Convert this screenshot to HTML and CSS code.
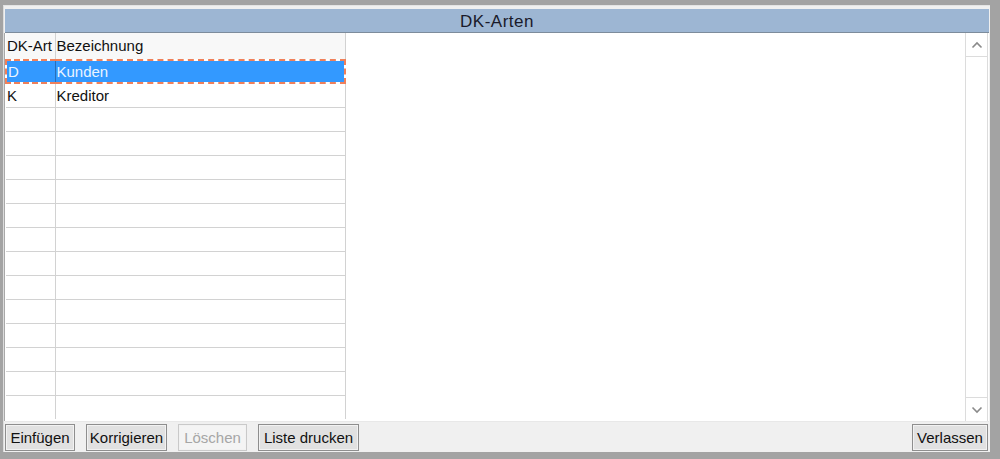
FILE: index.html
```html
<!DOCTYPE html>
<html lang="de">
<head>
<meta charset="utf-8">
<title>DK-Arten</title>
<link rel="stylesheet" href="styles.css">
</head>
<body>
<div class="window">
  <div class="titlebar">DK-Arten</div>
  <div class="main">
    <table class="grid">
      <colgroup><col class="col1"><col class="col2"></colgroup>
      <thead>
        <tr><th>DK-Art</th><th>Bezeichnung</th></tr>
      </thead>
      <tbody>
        <tr class="sel"><td class="c1">D</td><td class="c2">Kunden</td></tr>
        <tr><td>K</td><td>Kreditor</td></tr>
        <tr><td></td><td></td></tr>
        <tr><td></td><td></td></tr>
        <tr><td></td><td></td></tr>
        <tr><td></td><td></td></tr>
        <tr><td></td><td></td></tr>
        <tr><td></td><td></td></tr>
        <tr><td></td><td></td></tr>
        <tr><td></td><td></td></tr>
        <tr><td></td><td></td></tr>
        <tr><td></td><td></td></tr>
        <tr><td></td><td></td></tr>
        <tr><td></td><td></td></tr>
        <tr class="last"><td></td><td></td></tr>
      </tbody>
    </table>
    <div class="spacer"></div>
    <div class="scrollbar">
      <div class="sb-btn">
        <svg width="12" height="8" viewBox="0 0 12 8"><path d="M1.5 6.5 L6 2 L10.5 6.5" fill="none" stroke="#8a8a8a" stroke-width="1.6"/></svg>
      </div>
      <div class="sb-track"></div>
      <div class="sb-btn">
        <svg width="12" height="8" viewBox="0 0 12 8"><path d="M1.5 1.5 L6 6 L10.5 1.5" fill="none" stroke="#8a8a8a" stroke-width="1.6"/></svg>
      </div>
    </div>
  </div>
  <div class="buttons">
    <button class="btn w-einf">Einfügen</button>
    <button class="btn w-korr">Korrigieren</button>
    <button class="btn w-loe" disabled>Löschen</button>
    <button class="btn w-liste">Liste drucken</button>
    <div class="fill"></div>
    <button class="btn w-verl">Verlassen</button>
  </div>
</div>
</body>
</html>
```

FILE: styles.css
```css
html, body {
  margin: 0;
  padding: 0;
}
body {
  width: 1000px;
  height: 459px;
  overflow: hidden;
  background: #a3a3a3;
  font-family: "Liberation Sans", Arial, sans-serif;
  font-size: 15px;
  color: #111;
}
.window {
  box-sizing: border-box;
  margin: 5px 0 0 3px;
  width: 987px;
  height: 447px;
  background: #f0f0f0;
  border-top: 1px solid #e4e4e4;
  border-left: 1px solid #dcdcdc;
  padding: 3px 1px 0 1px;
  display: flex;
  flex-direction: column;
}
.titlebar {
  height: 23px;
  background: #9db6d3;
  border-bottom: 1px solid #7d8c9c;
  text-align: center;
  font-size: 17px;
  letter-spacing: 0.5px;
  line-height: 25px;
  color: #1a1a2a;
}
.main {
  height: 388px;
  margin-left: -1px;
  background: #ffffff;
  display: flex;
  align-items: stretch;
  border-left: 1px solid #a8a8a8;
}
.grid {
  border-collapse: collapse;
  table-layout: fixed;
  width: 339px;
  align-self: flex-start;
}
.grid .col1 {
  width: 49px;
}
.grid .col2 {
  width: 290px;
}
.grid th, .grid td {
  height: 23px;
  padding: 0 0 0 1px;
  border-right: 1px solid #d2d2d2;
  border-bottom: 1px solid #d2d2d2;
  font-weight: normal;
  text-align: left;
  white-space: nowrap;
  overflow: hidden;
  line-height: 23px;
}
.grid th {
  background: #f8f8f8;
  height: 24px;
  line-height: 26px;
}
.grid tr.sel td {
  background: #3399ff;
  color: #eaf4ff;
  border-top: 2px dashed #f0805a;
  border-bottom: 2px dashed #f0805a;
  height: 20px;
  line-height: 21px;
}
.grid tr.sel td.c1 {
  border-left: 2px dashed #f0805a;
  border-right: 1px solid #2a6fb8;
}
.grid tr.sel td.c2 {
  border-right: 2px dashed #f0805a;
}
.grid tr.last td {
  border-bottom: none;
}
.spacer {
  flex: 1;
}
.scrollbar {
  width: 21px;
  margin-right: 1px;
  display: flex;
  flex-direction: column;
  border-left: 1px solid #dcdcdc;
  border-right: 1px solid #dcdcdc;
}
.sb-btn {
  height: 23px;
  display: flex;
  align-items: center;
  justify-content: center;
  border-bottom: 1px solid #dcdcdc;
}
.sb-btn:last-child {
  border-bottom: none;
  border-top: 1px solid #dcdcdc;
}
.sb-track {
  flex: 1;
}
.buttons {
  display: flex;
  align-items: flex-start;
  gap: 11px;
  padding: 2px 1px 0 0;
  height: 28px;
  border-top: 1px solid #e8e8e8;
}
.btn {
  box-sizing: border-box;
  height: 27px;
  padding: 0;
  background: #e1e1e1;
  border: 1px solid #8e8e8e;
  box-shadow: inset 0 0 0 1px #f2f2f2;
  font-family: "Liberation Sans", Arial, sans-serif;
  font-size: 15px;
  color: #111;
  text-align: center;
}
.btn:disabled {
  background: #f4f4f4;
  border-color: #c9c9c9;
  color: #a6a6a6;
}
.w-einf { width: 70px; }
.w-korr { width: 81px; }
.w-loe { width: 69px; }
.w-liste { width: 101px; }
.w-verl { width: 76px; }
.fill {
  flex: 1;
}
```
